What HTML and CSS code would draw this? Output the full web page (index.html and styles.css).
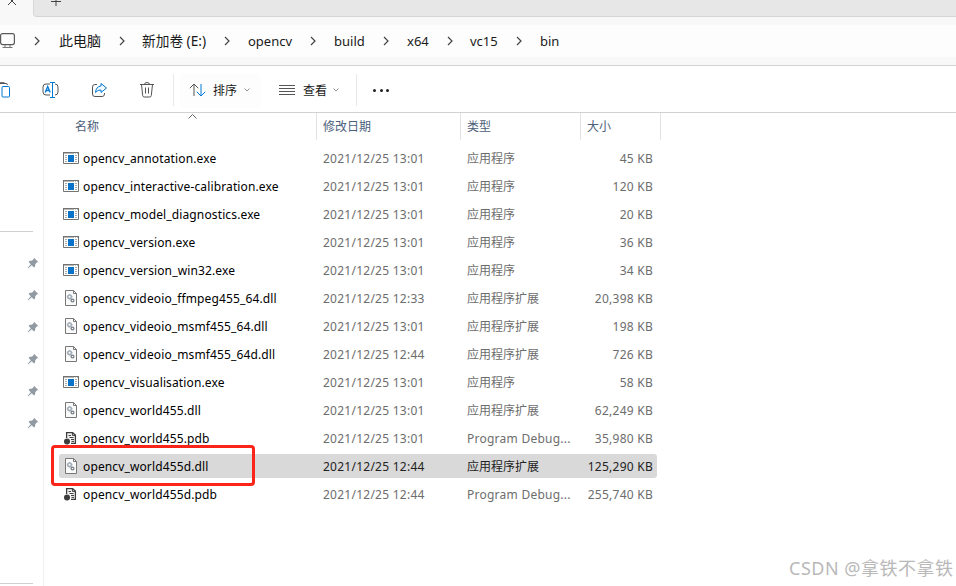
FILE: index.html
```html
<!DOCTYPE html>
<html lang="zh-CN">
<head>
<meta charset="utf-8">
<title>bin</title>
<link rel="stylesheet" href="styles.css">
</head>
<body>
<svg class="defs" width="0" height="0">
  <symbol id="chev" viewBox="0 0 6 10"><path d="M1 1l4 4-4 4" fill="none" stroke="#444" stroke-width="1.2"/></symbol>
  <symbol id="down" viewBox="0 0 6 4"><path d="M.5 .5L3 3 5.500.5" fill="none" stroke="#929292"/></symbol>
  <symbol id="exe" viewBox="0 0 16 16">
    <path d="M.5 2.500h15v11H.5z" fill="#fff" stroke="#737373"/>
    <path d="M0 2h16v1.500H0z" fill="#737373"/>
    <path d="M11 3.500h1M13 3.500h1" stroke="#fff"/>
    <path d="M2 5.500h2M2 7.500h2M2 9.500h2M2 11.500h2M12 5.500h2M12 7.500h2M12 9.500h2M12 11.500h2" stroke="#aaa"/>
    <path d="M5 5h6v7H5z" fill="#0873c9"/>
  </symbol>
  <symbol id="dll" viewBox="0 0 16 16">
    <path d="M2.500.5h8l3 3v12h-11z" fill="#fafafa" stroke="#777"/>
    <path d="M10.500.5v3h3" fill="none" stroke="#777"/>
    <circle cx="6.600" cy="6.800" r="1.800" fill="#fff" stroke="#a4aeb9" stroke-width="1.600"/>
    <path d="M6.600 4v1M6.600 8.500v1M3.800 6.800h1M8.500 6.800h1" stroke="#a4aeb9"/>
    <circle cx="9.500" cy="10.500" r="1.400" fill="#fff" stroke="#77818b" stroke-width="1.300"/>
  </symbol>
  <symbol id="pdb" viewBox="0 0 16 16">
    <path d="M3.600 8V2.700h6L12.400 5v8.300H8" fill="#f5f5f5" stroke="#3c3c3c" stroke-width="1.300"/>
    <path d="M9.400 2.700v2.700h3M5.500 5.500H8M6.500 7.500h4M8 9.500h3M8.500 11.400h2.500" fill="none" stroke="#3c3c3c"/>
    <circle cx="4" cy="11.500" r="3" fill="#3c3c3c"/>
  </symbol>
  <symbol id="pin" viewBox="0 0 12 12">
    <path d="M7 .8L11.200 5 9.800 5.500 8.400 7l-.4 2.600-1 .8L4.700 8.200 1.300 11.300.7 10.700 3.800 7.300 1.600 5l.8-1L5 3.600 6.500 2.200z" fill="#929aa3"/>
  </symbol>
</svg>
<div class="window">
  <header class="tabs">
    <div class="tab"><svg width="10" height="9" viewBox="0 0 10 9"><path d="M1 0l8 8M9 0L1 8" stroke="#444" fill="none"/></svg></div>
    <div class="strip"><svg width="10" height="10" viewBox="0 0 10 10"><path d="M5 0v10M0 5.500h10" stroke="#444" fill="none"/></svg></div>
  </header>
  <nav class="address">
    <div class="crumbs">
      <svg class="pc" width="16" height="16" viewBox="0 0 16 16"><rect x=".6" y=".6" width="13.800" height="11" rx="2" fill="none" stroke="#5a5a5a" stroke-width="1.200"/><path d="M5 12v2M10 12v2M2.500 14.500h10" stroke="#777" fill="none"/></svg>
      <svg class="sep s1"><use href="#chev"/></svg><span class="c1">此电脑</span>
      <svg class="sep s2"><use href="#chev"/></svg><span class="c2">新加卷 (E:)</span>
      <svg class="sep s3"><use href="#chev"/></svg><span class="c3">opencv</span>
      <svg class="sep s4"><use href="#chev"/></svg><span class="c4">build</span>
      <svg class="sep s5"><use href="#chev"/></svg><span class="c5">x64</span>
      <svg class="sep s6"><use href="#chev"/></svg><span class="c6">vc15</span>
      <svg class="sep s7"><use href="#chev"/></svg><span class="c7">bin</span>
    </div>
  </nav>
  <div class="toolbar">
    <div class="icons">
      <svg width="11" height="18" viewBox="0 0 11 18"><path d="M0 2.500h6q1.500 0 1.500 1.500" fill="none" stroke="#555"/><path d="M0 1.500h4.500" stroke="#777"/><rect x="2" y="5.500" width="7.500" height="10.500" rx="1" fill="#fff" stroke="#0078d4"/></svg>
      <svg width="17" height="18" viewBox="0 0 17 18"><path d="M8 3H4Q1 3 1 6v5q0 3 3 3h4M13 3q3 0 3 3v5q0 3-3 3" fill="none" stroke="#555"/><path d="M3.200 11.500L5.700 5.500l2.500 6M4 9.500h3.500" fill="none" stroke="#0078d4" stroke-width="1.300"/><path d="M10.500 1.500v15M8 1.500h5M8 16.500h5" stroke="#0078d4" fill="none"/></svg>
      <svg width="17" height="18" viewBox="0 0 17 18"><path d="M6 3.500H4q-2.500 0-2.500 2.500v7q0 2.500 2.500 2.500h7q2.500 0 2.500-2.500v-1" fill="none" stroke="#555"/><path d="M10 2.500l5.500 4.500L10 11.500V9Q7 8.500 4.500 11.500 5 5.500 10 5z" fill="#f3faff" stroke="#0078d4" stroke-linejoin="round"/></svg>
      <svg width="16" height="18" viewBox="0 0 16 18"><path d="M1 3.500h14M5.500 3.500q0-2 2.500-2t2.500 2M2.500 3.500l1.200 11q.2 1.500 1.500 1.500h5.600q1.300 0 1.500-1.500l1.200-11M6.500 6.500v6M9.500 6.500v6" fill="none" stroke="#555"/></svg>
    </div>
    <div class="sort">
      <svg width="17" height="14" viewBox="0 0 17 14"><path d="M5 13V1M.8 5.200L5 1l4.200 4.200" fill="none" stroke="#555"/><path d="M12 1v12M7.800 8.800L12 13l4.200-4.200" fill="none" stroke="#0078d4"/></svg>
      <span>排序</span><svg class="down"><use href="#down"/></svg>
    </div>
    <div class="view">
      <svg width="16" height="12" viewBox="0 0 16 12"><path d="M0 1.500h16M0 4.500h16M0 7.500h16M0 10.500h16" stroke="#555"/></svg>
      <span>查看</span><svg class="down"><use href="#down"/></svg>
    </div>
    <div class="more"><i></i><i></i><i></i></div>
  </div>
  <main class="content">
    <aside class="side">
      <div class="pins">
        <svg><use href="#pin"/></svg><svg><use href="#pin"/></svg><svg><use href="#pin"/></svg><svg><use href="#pin"/></svg><svg><use href="#pin"/></svg><svg><use href="#pin"/></svg>
      </div>
    </aside>
    <section class="files">
      <div class="head">
        <div>名称<svg class="up" width="9" height="5" viewBox="0 0 9 5"><path d="M.5 4.500l4-4 4 4" fill="none" stroke="#666"/></svg></div>
        <div>修改日期</div><div>类型</div><div>大小</div>
      </div>
      <div class="rows">
        <div class="row"><svg><use href="#exe"/></svg><span class="name">opencv_annotation.exe</span><span class="date">2021/12/25 13:01</span><span class="type">应用程序</span><span class="size">45 KB</span></div>
        <div class="row"><svg><use href="#exe"/></svg><span class="name">opencv_interactive-calibration.exe</span><span class="date">2021/12/25 13:01</span><span class="type">应用程序</span><span class="size">120 KB</span></div>
        <div class="row"><svg><use href="#exe"/></svg><span class="name">opencv_model_diagnostics.exe</span><span class="date">2021/12/25 13:01</span><span class="type">应用程序</span><span class="size">20 KB</span></div>
        <div class="row"><svg><use href="#exe"/></svg><span class="name">opencv_version.exe</span><span class="date">2021/12/25 13:01</span><span class="type">应用程序</span><span class="size">36 KB</span></div>
        <div class="row"><svg><use href="#exe"/></svg><span class="name">opencv_version_win32.exe</span><span class="date">2021/12/25 13:01</span><span class="type">应用程序</span><span class="size">34 KB</span></div>
        <div class="row"><svg><use href="#dll"/></svg><span class="name">opencv_videoio_ffmpeg455_64.dll</span><span class="date">2021/12/25 12:33</span><span class="type">应用程序扩展</span><span class="size">20,398 KB</span></div>
        <div class="row"><svg><use href="#dll"/></svg><span class="name">opencv_videoio_msmf455_64.dll</span><span class="date">2021/12/25 13:01</span><span class="type">应用程序扩展</span><span class="size">198 KB</span></div>
        <div class="row"><svg><use href="#dll"/></svg><span class="name">opencv_videoio_msmf455_64d.dll</span><span class="date">2021/12/25 12:44</span><span class="type">应用程序扩展</span><span class="size">726 KB</span></div>
        <div class="row"><svg><use href="#exe"/></svg><span class="name">opencv_visualisation.exe</span><span class="date">2021/12/25 13:01</span><span class="type">应用程序</span><span class="size">58 KB</span></div>
        <div class="row"><svg><use href="#dll"/></svg><span class="name">opencv_world455.dll</span><span class="date">2021/12/25 13:01</span><span class="type">应用程序扩展</span><span class="size">62,249 KB</span></div>
        <div class="row"><svg><use href="#pdb"/></svg><span class="name">opencv_world455.pdb</span><span class="date">2021/12/25 13:01</span><span class="type latin">Program Debug...</span><span class="size">35,980 KB</span></div>
        <div class="row selected"><svg><use href="#dll"/></svg><span class="name">opencv_world455d.dll</span><span class="date">2021/12/25 12:44</span><span class="type">应用程序扩展</span><span class="size">125,290 KB</span><div class="mark"></div></div>
        <div class="row"><svg><use href="#pdb"/></svg><span class="name">opencv_world455d.pdb</span><span class="date">2021/12/25 12:44</span><span class="type latin">Program Debug...</span><span class="size">255,740 KB</span></div>
      </div>
    </section>
  </main>
  <div class="watermark">CSDN @拿铁不拿铁</div>
</div>
</body>
</html>
```
FILE: styles.css
```css
* { box-sizing: border-box; }
body { margin: 0; font: 12px "Noto Sans", "Noto Sans CJK SC", sans-serif; color: #1a1a1a; background: #fff; }
svg { display: block; flex: none; }
.defs { position: absolute; }
.window { position: relative; width: 956px; height: 586px; overflow: hidden; display: flex; flex-direction: column; }
.tabs { height: 17px; flex: none; display: flex; background: #f8f8f8; }
.tab { width: 33px; padding: 0 0 0 7px; overflow: hidden; }
.tab svg { margin-top: -3px; }
.strip { flex: 1; background: #e7e7e7; border-left: 1px solid #d8d8d8; border-bottom: 1px solid #d5d5d5; border-bottom-left-radius: 4px; padding-left: 17px; }
.strip svg { margin-top: -4px; }
.address { height: 49px; flex: none; padding: 8px 0; background: #f8f8f8; border-bottom: 1px solid #d2d2d2; }
.crumbs { height: 32px; background: #fdfdfd; display: flex; align-items: center; font-size: 13px; white-space: nowrap; }
.crumbs span { flex: none; line-height: 20px; }
.pc { margin-left: -0.5px; }
.sep { width: 6px; height: 10px; }
.s1 { margin-left: 18.5px; }
.c1 { width: 60px; margin-left: 19px; font-size: 14px; }
.c2 { width: 82px; margin-left: 17px; font-size: 13.7px; }
.c3 { width: 62px; margin-left: 18px; }
.c4 { width: 49px; margin-left: 18px; }
.c5 { width: 40px; margin-left: 18px; }
.c6 { width: 46px; margin-left: 17px; }
.c7 { margin-left: 18px; }
.toolbar { height: 47px; flex: none; display: flex; align-items: center; border-bottom: 1px solid #d2d2d2; padding-top: 2px; }
.icons { width: 174px; height: 32px; display: flex; align-items: center; border-right: 1px solid #e8e8e8; }
.icons svg:nth-child(2) { margin-left: 31px; }
.icons svg:nth-child(3) { margin-left: 32px; }
.icons svg:nth-child(4) { margin-left: 31px; }
.sort { width: 81px; height: 35px; margin-left: 6px; background: #fdfdfd; border-radius: 4px; display: flex; align-items: center; padding-left: 9px; }
.sort span { width: 31px; margin-left: 7px; }
.view { width: 96px; height: 32px; display: flex; align-items: center; border-right: 1px solid #e8e8e8; padding-left: 18px; }
.view span { width: 30px; margin-left: 8px; }
.down { width: 6px; height: 4px; }
.more { display: flex; gap: 3.5px; margin-left: 16px; }
.more i { width: 3px; height: 3px; border-radius: 50%; background: #222; }
.content { flex: 1; display: flex; }
.side { width: 44px; flex: none; border-right: 1px solid #f0f0f0; padding-top: 118px; }
.pins { width: 33px; height: 353px; border-top: 1px solid #d0d0d0; border-bottom: 1px solid #d0d0d0; padding: 25px 0 0 27px; display: flex; flex-direction: column; gap: 20px; }
.pins svg { width: 12px; height: 12px; }
.files { width: 617px; }
.head { display: grid; grid-template-columns: 273px 144px 120px 80px; height: 27px; line-height: 27px; color: #4c607a; }
.head div { border-right: 1px solid #e2e2e2; padding-left: 6px; }
.head div:first-child { display: flex; padding-left: 31px; }
.up { margin: 1px 0 0 89px; }
.rows { padding: 4px 4px 0 15px; }
.row { position: relative; display: grid; grid-template-columns: 16px 244px 144px 110px 1fr; align-items: center; height: 24px; margin-top: 2px; margin-bottom: 4px; padding: 0 4px; line-height: 22px; color: #6d6d6d; white-space: nowrap; border-radius: 3px; }
.row svg { width: 16px; height: 16px; }
.row span { padding-top: 2px; }
.row .name { color: #000; padding-left: 4px; letter-spacing: 0.13px; }
.date, .latin { letter-spacing: 0.25px; }
.size { text-align: right; letter-spacing: 0.25px; }
.selected { background: #d9d9d9; color: #222; }
.mark { position: absolute; left: -8px; top: -9px; width: 204px; height: 41px; border: 3px solid #fb2418; border-radius: 4px; }
.watermark { position: absolute; right: 3px; bottom: 4px; font-size: 18px; letter-spacing: 0.5px; margin-right: -0.5px; line-height: 28px; color: #b9b9b9; white-space: nowrap; }
```
